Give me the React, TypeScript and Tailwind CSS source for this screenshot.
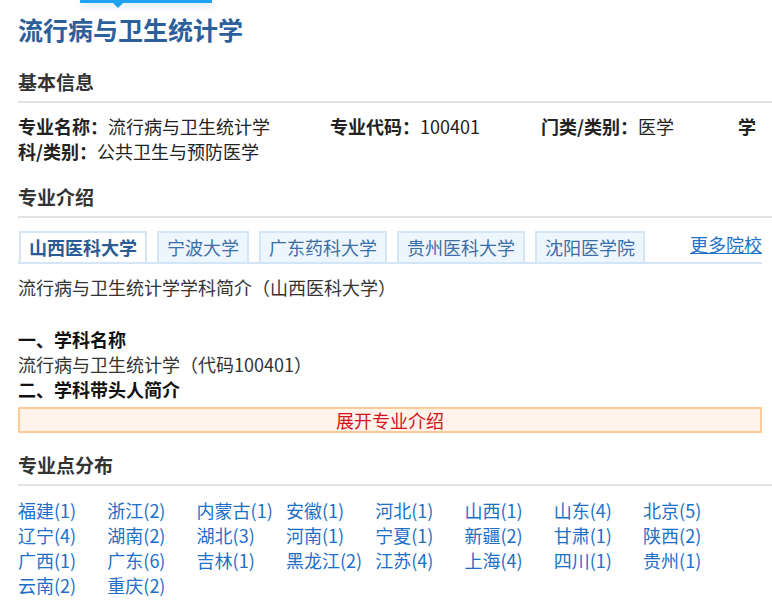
import React from 'react';

const font = '"Noto Sans CJK SC", "Microsoft YaHei", sans-serif';

const schools = ['山西医科大学', '宁波大学', '广东药科大学', '贵州医科大学', '沈阳医学院'];

const provinces = [
  '福建(1)', '浙江(2)', '内蒙古(1)', '安徽(1)', '河北(1)', '山西(1)', '山东(4)', '北京(5)',
  '辽宁(4)', '湖南(2)', '湖北(3)', '河南(1)', '宁夏(1)', '新疆(2)', '甘肃(1)', '陕西(2)',
  '广西(1)', '广东(6)', '吉林(1)', '黑龙江(2)', '江苏(4)', '上海(4)', '四川(1)', '贵州(1)',
  '云南(2)', '重庆(2)',
];

const SectionTitle = ({ children, className }: { children: React.ReactNode; className: string }) => (
  <div className={`${className} -mr-[10px] border-b-2 border-[#e2e2e2] pb-[5px]`}>
    <h2 className="text-[19px] font-bold leading-[28px] text-[#333]">{children}</h2>
  </div>
);

export default function App() {
  return (
    <div className="h-[613px] w-[772px] overflow-hidden bg-white" style={{ fontFamily: font }}>
      {/* top tab marker */}
      <div className="relative h-[10px]">
        <div className="ml-[80px] h-[3px] w-[132px] bg-[#1ea2f2] shadow-[0_3px_6px_rgba(30,120,200,0.25)]" />
        <div className="absolute left-[112px] top-[2px] h-0 w-0 border-x-[6px] border-t-[6px] border-x-transparent border-t-[#1ea2f2]" />
      </div>

      <div className="pl-[18px] pr-[10px]">
        <h1 className="text-[25px] font-bold leading-[38px] text-[#2c5f9b]">流行病与卫生统计学</h1>

        <SectionTitle className="mt-[20px]">基本信息</SectionTitle>

        <div className="mt-[11px] text-[18px] leading-[25px] text-[#222]">
          <div className="flex">
            <span className="w-[312px] shrink-0">
              <b>专业名称：</b>流行病与卫生统计学
            </span>
            <span className="w-[211px] shrink-0">
              <b>专业代码：</b>100401
            </span>
            <span className="w-[197px] shrink-0">
              <b>门类/类别：</b>医学
            </span>
            <b>学</b>
          </div>
          <div>
            <b>科/类别：</b>公共卫生与预防医学
          </div>
        </div>

        <SectionTitle className="mt-[19px]">专业介绍</SectionTitle>

        <div className="mt-[13px] flex items-end border-b-2 border-[#d4e6f6]">
          {schools.map((s, i) => (
            <div
              key={s}
              className={`mr-[10px] border-2 border-b-0 border-[#d4e6f6] px-[8px] text-[18px] leading-[29px] ${
                i === 0
                  ? 'ml-px bg-white font-bold text-[#2a5b92]'
                  : 'bg-[#eef6fd] text-[#3a6ea6]'
              }`}
            >
              {s}
            </div>
          ))}
          <a href="#" className="mb-[5px] ml-auto text-[18px] leading-[25px] text-[#2471c8] underline">
            更多院校
          </a>
        </div>

        <div className="mt-[11px] text-[18px] leading-[25px] text-[#333]">
          <p>流行病与卫生统计学学科简介（山西医科大学）</p>
          <div className="h-[27px]" />
          <p className="font-bold text-[#111]">一、学科名称</p>
          <p>流行病与卫生统计学（代码100401）</p>
          <p className="font-bold text-[#111]">二、学科带头人简介</p>
        </div>

        <div className="mt-[5px] border-2 border-[#fdcb98] bg-[#fff3ea] text-center text-[18px] leading-[22px] text-[#d5111c]">
          展开专业介绍
        </div>

        <SectionTitle className="mt-[18px]">专业点分布</SectionTitle>

        <div className="mt-[12px] grid grid-cols-[repeat(8,89.3px)] text-[18px] leading-[25px]">
          {provinces.map((p) => (
            <a key={p} href="#" className="whitespace-nowrap text-[#1d6fc8]">
              {p}
            </a>
          ))}
        </div>
      </div>
    </div>
  );
}
